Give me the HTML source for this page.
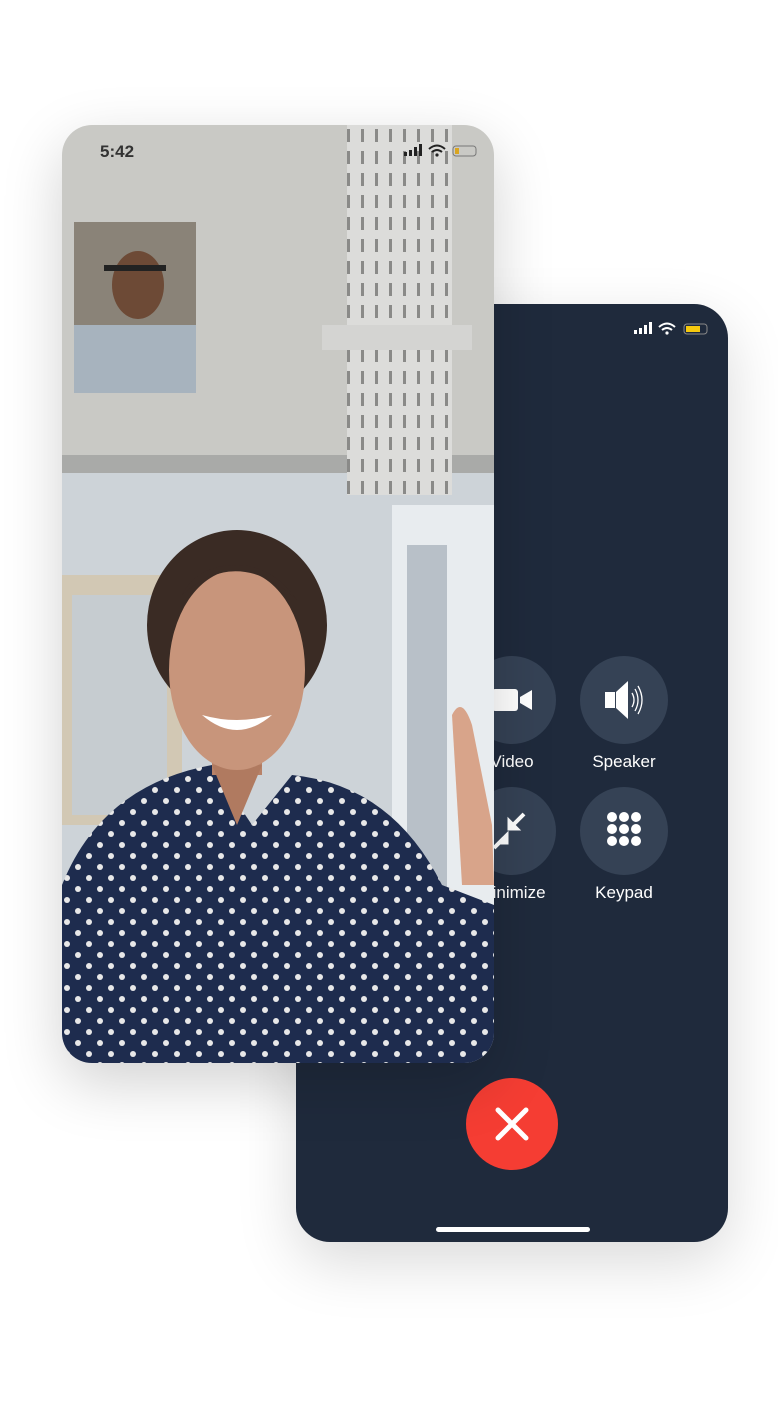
<!DOCTYPE html>
<html><head><meta charset="utf-8"><style>
body{margin:0;width:778px;height:1422px;background:#fff;position:relative;overflow:hidden;font-family:"Liberation Sans",sans-serif}
.dark{position:absolute;left:296px;top:304px;width:432px;height:938px;background:#1f2a3c;border-radius:34px;box-shadow:0 20px 60px rgba(0,0,0,.15)}
.front{position:absolute;left:62px;top:125px;width:432px;height:938px;border-radius:30px;overflow:hidden;box-shadow:0 20px 60px rgba(0,0,0,.18)}
.btn{position:absolute;width:88px;height:88px;border-radius:50%;background:#354255}
.lbl{position:absolute;color:#fff;font-size:17px;width:120px;text-align:center}
</style></head><body>
<div class="dark">
 <svg style="position:absolute;left:338px;top:18px" width="80" height="14" viewBox="0 0 80 14">
  <rect x="0" y="8" width="3" height="4" fill="#fff"/><rect x="5" y="6" width="3" height="6" fill="#fff"/><rect x="10" y="3" width="3" height="9" fill="#fff"/><rect x="15" y="0" width="3" height="12" fill="#fff"/>
  <path d="M25 5 Q33 -2 41 5" stroke="#fff" stroke-width="2" fill="none"/><path d="M28 8 Q33 4 38 8" stroke="#fff" stroke-width="2" fill="none"/><circle cx="33" cy="11" r="1.6" fill="#fff"/>
  <rect x="50" y="2" width="23" height="10" rx="3" fill="none" stroke="#888" stroke-width="1"/><rect x="52" y="4" width="14" height="6" fill="#f6c90e"/>
 </svg>
 <div class="btn" style="left:172px;top:352px"></div>
 <div class="btn" style="left:284px;top:352px"></div>
 <div class="btn" style="left:172px;top:483px"></div>
 <div class="btn" style="left:284px;top:483px"></div>
 <svg style="position:absolute;left:196px;top:382px" width="44" height="28"><rect x="0" y="3" width="26" height="22" rx="3" fill="#fff"/><path d="M28 11 L40 4 V24 L28 17Z" fill="#fff"/></svg>
 <svg style="position:absolute;left:306px;top:374px" width="46" height="44"><rect x="3" y="14" width="10" height="16" fill="#fff"/><path d="M14 14 L26 3 V41 L14 30Z" fill="#fff"/><path d="M30 15 Q34 22 30 29 M33 11 Q39 22 33 33 M36 8 Q44 22 36 36" stroke="#fff" stroke-width="1.3" fill="none"/></svg>
 <svg style="position:absolute;left:190px;top:504px" width="50" height="46" stroke="#fff" stroke-width="4" fill="#fff"><path d="M38 6 L26 18" /><path d="M22 10 V22 H34Z" stroke-width="1"/><path d="M8 40 L18 30"/><path d="M22 24 V36 H10Z" stroke-width="1"/></svg>
 <svg style="position:absolute;left:311px;top:508px" width="36" height="36" fill="#fff">
  <circle cx="5" cy="5" r="5"/><circle cx="17" cy="5" r="5"/><circle cx="29" cy="5" r="5"/>
  <circle cx="5" cy="17" r="5"/><circle cx="17" cy="17" r="5"/><circle cx="29" cy="17" r="5"/>
  <circle cx="5" cy="29" r="5"/><circle cx="17" cy="29" r="5"/><circle cx="29" cy="29" r="5"/></svg>
 <div class="lbl" style="left:156px;top:448px">Video</div>
 <div class="lbl" style="left:268px;top:448px">Speaker</div>
 <div class="lbl" style="left:156px;top:579px">Minimize</div>
 <div class="lbl" style="left:268px;top:579px">Keypad</div>
 <div style="position:absolute;left:170px;top:774px;width:92px;height:92px;border-radius:50%;background:#f53d33"></div>
 <svg style="position:absolute;left:198px;top:802px" width="36" height="36"><path d="M4 4 L32 32 M32 4 L4 32" stroke="#fff" stroke-width="5" stroke-linecap="round"/></svg>
 <div style="position:absolute;left:140px;top:923px;width:154px;height:5px;border-radius:3px;background:#fff"></div>
</div>
<div class="front">
 <svg width="432" height="938" viewBox="0 0 432 938">
  <defs>
   <pattern id="dots" width="22" height="22" patternUnits="userSpaceOnUse"><rect width="22" height="22" fill="#1e2c4e"/><circle cx="5" cy="5" r="3" fill="#e8e8e8"/><circle cx="16" cy="16" r="3" fill="#e8e8e8"/></pattern>
   <pattern id="slots" width="14" height="22" patternUnits="userSpaceOnUse"><rect width="14" height="22" fill="#dcdcda"/><rect x="5" y="4" width="3" height="13" fill="#8a8a88"/></pattern>
  </defs>
  <rect width="432" height="345" fill="#c9c9c5"/>
  <rect x="0" y="330" width="432" height="18" fill="#a9aaa8"/>
  <rect x="0" y="348" width="432" height="590" fill="#cdd3d8"/>
  <rect x="0" y="450" width="120" height="250" fill="#d2c8b4"/>
  <rect x="10" y="470" width="95" height="220" fill="#c6ccd0"/>
  <rect x="330" y="380" width="102" height="480" fill="#e8ecef"/>
  <rect x="345" y="420" width="40" height="420" fill="#b8c0c8"/>
  <rect x="285" y="0" width="105" height="370" fill="url(#slots)"/>
  <rect x="260" y="200" width="150" height="25" fill="#d4d4d2"/>
  <path d="M0 760 Q40 660 150 640 L190 700 L230 650 Q330 660 380 760 L432 780 L432 938 L0 938Z" fill="url(#dots)"/>
  <rect x="150" y="560" width="50" height="90" fill="#b88268"/>
  <path d="M150 640 L175 700 L200 640Z" fill="#b07a60"/>
  <ellipse cx="175" cy="500" rx="90" ry="95" fill="#3a2b24"/>
  <ellipse cx="175" cy="545" rx="68" ry="100" fill="#c8957b"/>
  <path d="M120 470 Q175 420 235 475 Q210 440 175 440 Q135 440 120 470Z" fill="#3a2b24"/>
  <path d="M140 590 Q175 620 210 590 Q175 600 140 590Z" fill="#fff"/>
  <path d="M390 590 Q400 570 410 600 L430 700 L432 760 L400 760Z" fill="#d8a48a"/>
  <rect x="12" y="97" width="122" height="171" fill="#8a8378"/>
  <rect x="12" y="200" width="122" height="68" fill="#a7b3be"/>
  <ellipse cx="76" cy="160" rx="26" ry="34" fill="#6d4a36"/>
  <rect x="42" y="140" width="62" height="6" fill="#222"/>
 </svg>
 <div style="position:absolute;left:38px;top:17px;font-size:17px;font-weight:bold;color:#333">5:42</div>
 <svg style="position:absolute;left:342px;top:19px" width="80" height="14" viewBox="0 0 80 14">
  <rect x="0" y="8" width="3" height="4" fill="#222"/><rect x="5" y="6" width="3" height="6" fill="#222"/><rect x="10" y="3" width="3" height="9" fill="#222"/><rect x="15" y="0" width="3" height="12" fill="#222"/>
  <path d="M25 5 Q33 -2 41 5" stroke="#222" stroke-width="2" fill="none"/><path d="M28 8 Q33 4 38 8" stroke="#222" stroke-width="2" fill="none"/><circle cx="33" cy="11" r="1.6" fill="#222"/>
  <rect x="49" y="2" width="23" height="10" rx="3" fill="none" stroke="#777" stroke-width="1"/><rect x="51" y="4" width="4" height="6" fill="#d9a520"/>
 </svg>
</div>
</body></html>
